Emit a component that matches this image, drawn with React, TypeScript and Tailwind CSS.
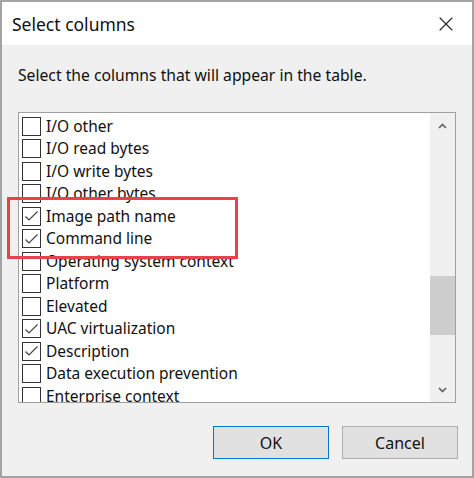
import { X } from 'lucide-react';

const rows = [
    { label: 'I/O other', checked: false },
    { label: 'I/O read bytes', checked: false },
    { label: 'I/O write bytes', checked: false },
    { label: 'I/O other bytes', checked: false },
    { label: 'Image path name', checked: true },
    { label: 'Command line', checked: true },
    { label: 'Operating system context', checked: false },
    { label: 'Platform', checked: false },
    { label: 'Elevated', checked: false },
    { label: 'UAC virtualization', checked: true },
    { label: 'Description', checked: true },
    { label: 'Data execution prevention', checked: false },
    { label: 'Enterprise context', checked: false },
];

function CheckBox({ checked }: { checked: boolean }) {
    return (
        <div className="w-[19px] h-[19px] border-[1.5px] border-[#333] bg-white flex items-center justify-center shrink-0">
            {checked && (
                <svg width="15" height="12" viewBox="0 0 15 12" fill="none">
                    <path d="M1.5 6.5 L5 10 L13.5 1.5" stroke="#444" strokeWidth="1.2" />
                </svg>
            )}
        </div>
    );
}

export default function App() {
    return (
        <div
            className="relative w-[474px] h-[478px] bg-[#f0f0f0] border-2 border-[#a3a3a3] flex flex-col text-[#111]"
            style={{ fontFamily: '"Noto Sans", "Open Sans", sans-serif' }}
        >
            {/* Title bar */}
            <div className="h-[43px] bg-white flex items-center justify-between pl-[10px] pr-[14px]">
                <span className="text-[17.5px] leading-none mt-[2px]">Select columns</span>
                <X size={24} strokeWidth={1.1} className="text-[#222]" />
            </div>

            <p className="mt-[21px] ml-[16px] text-[15.7px] leading-[18px]">
                Select the columns that will appear in the table.
            </p>

            {/* List box */}
            <div className="mt-[28px] ml-[16px] w-[438px] h-[291px] border border-[#a0a0a0] bg-white flex overflow-hidden">
                <div className="flex-1 pt-[2px] pl-[3px]">
                    {rows.map((row) => (
                        <div key={row.label} className="h-[22.5px] flex items-center gap-[5px]">
                            <CheckBox checked={row.checked} />
                            <span className="text-[15.5px] leading-none whitespace-nowrap">{row.label}</span>
                        </div>
                    ))}
                </div>
                <div className="w-[25px] bg-[#f0f0f0] flex flex-col items-center">
                    <div className="h-[25px] flex items-center justify-center">
                        <svg width="9" height="6" viewBox="0 0 9 6">
                            <path d="M1 5 L4.5 1.5 L8 5" stroke="#606060" strokeWidth="1.6" fill="none" />
                        </svg>
                    </div>
                    <div className="flex-1 w-full flex flex-col">
                        <div className="h-[138px]" />
                        <div className="h-[59px] w-full bg-[#cdcdcd]" />
                    </div>
                    <div className="h-[25px] flex items-center justify-center">
                        <svg width="9" height="6" viewBox="0 0 9 6">
                            <path d="M1 1 L4.5 4.5 L8 1" stroke="#606060" strokeWidth="1.6" fill="none" />
                        </svg>
                    </div>
                </div>
            </div>

            {/* Buttons */}
            <div className="mt-[23px] flex justify-end gap-[13px] pr-[14px]">
                <button className="w-[116px] h-[33px] bg-[#e1e1e1] border border-[#0078d7] text-[16px]">
                    OK
                </button>
                <button className="w-[116px] h-[33px] bg-[#e1e1e1] border border-[#adadad] text-[16px]">
                    Cancel
                </button>
            </div>

            {/* Highlight */}
            <div className="absolute left-[5px] top-[195px] w-[231px] h-[62px] border-[3px] border-[#e8434b] pointer-events-none" />
        </div>
    );
}
